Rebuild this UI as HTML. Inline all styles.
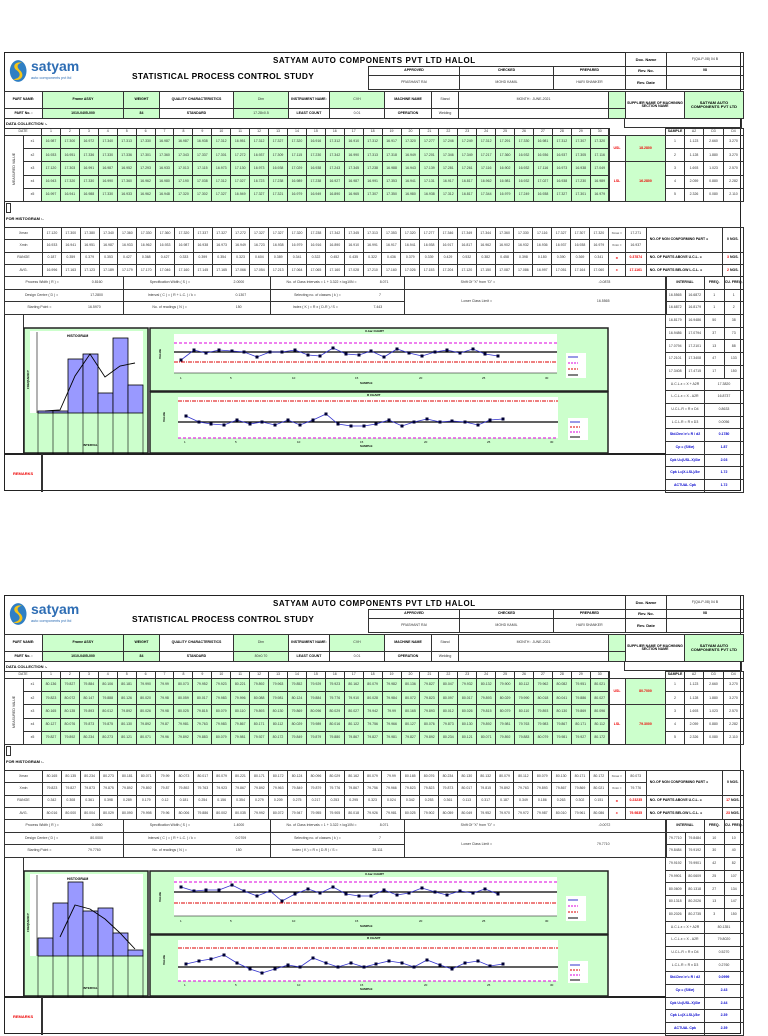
<!DOCTYPE html>
<html><head><meta charset="utf-8">
<style>
body{margin:0;width:768px;height:1024px;overflow:hidden;background:#fff;font-family:"Liberation Sans",sans-serif;position:relative}
.pg{position:absolute;left:4px;width:737px;height:439px;border:1.5px solid #222;box-sizing:border-box}
.a{position:absolute}
table{border-collapse:collapse;table-layout:fixed;position:absolute}
td{border:1px solid #333;font-size:3.5px;text-align:center;padding:0;overflow:hidden;white-space:nowrap;color:#333;line-height:1}
.g{background:#ccffcc}
.b{font-weight:bold;color:#000}
.r{color:#e00;font-weight:bold}
.bl{color:#00c;font-weight:bold}
.lbl{font-size:4px;font-weight:bold;color:#000}
.sp{display:flex;justify-content:space-around;padding:0 4px}
.mk{color:#e00;font-size:3px;font-weight:bold}
</style></head><body>

<!-- ================= PAGE 1 ================= -->
<div class="pg" style="top:52px">
  <svg class="a" style="left:4px;top:5px" width="20" height="26" viewBox="0 0 24 30"><ellipse cx="11" cy="15" rx="10" ry="13" fill="#2f7fc4"/><path d="M16 5 C8 3 3 9 9 14 C15 18 14 24 5 25 C12 28 20 22 14 15 C8 10 10 6 16 5Z" fill="#f5c518"/></svg>
  <div class="a" style="left:26px;top:5px;font-size:14px;font-weight:bold;color:#2d6db4">satyam</div>
  <div class="a" style="left:26px;top:23px;font-size:3.8px;color:#2d6db4">auto components pvt ltd</div>
  <div class="a b" style="left:268px;top:3px;font-size:8px;letter-spacing:0.6px">SATYAM AUTO COMPONENTS PVT LTD HALOL</div>
  <div class="a b" style="left:127px;top:18px;font-size:8.4px;letter-spacing:0.35px">STATISTICAL PROCESS CONTROL STUDY</div>
  <table style="left:363px;top:13px;width:257px"><colgroup><col style="width:91px"><col style="width:94px"><col style="width:72px"></colgroup>
   <tr style="height:9px"><td class="b">APPROVED</td><td class="b">CHECKED</td><td class="b">PREPARED</td></tr>
   <tr style="height:14px"><td>PRASHANT RAI</td><td>MOHD KAMIL</td><td>HARI SHANKER</td></tr></table>
  <table style="left:620px;top:-1px;width:118px"><colgroup><col style="width:41px"><col style="width:77px"></colgroup>
   <tr style="height:14px"><td class="lbl">Doc. Name</td><td>F(QA-P-08) 04 B</td></tr>
   <tr style="height:9px"><td class="lbl">Rev. No.</td><td class="b">08</td></tr>
   <tr style="height:14px"><td class="lbl">Rev. Date</td><td></td></tr></table>
  <table style="left:-1px;top:38px;width:739px"><colgroup><col style="width:38px"><col style="width:81px"><col style="width:36px"><col style="width:74px"><col style="width:55px"><col style="width:41px"><col style="width:55px"><col style="width:47px"><col style="width:27px"><col style="width:150px"><col style="width:17px"><col style="width:59px"><col style="width:59px"></colgroup>
   <tr style="height:17px"><td class="b">PART NAME:</td><td class="g b">Frame ASSY</td><td class="g b">WEIGHT</td><td class="b">QUALITY CHARACTERISTICS</td><td class="g">Dim</td><td class="b">INSTRUMENT NAME:</td><td class="g">CVH</td><td class="b">MACHINE NAME</td><td>Stand</td><td>MONTH : JUNE-2021</td><td class="g"></td><td rowspan="2" class="b">SUPPLIER NAME OF MACHINING<br>SECTION NAME</td><td rowspan="2" class="g b" style="font-size:4px">SATYAM AUTO<br>COMPONENTS PVT LTD</td></tr>
   <tr style="height:10px"><td class="b">PART No. :</td><td class="g b">1010-0405-000</td><td class="g b">84</td><td class="b">STANDARD</td><td class="g">17.28±0.5</td><td class="b">LEAST COUNT</td><td>0.01</td><td class="b">OPERATION</td><td>Welding</td><td></td><td class="g"></td></tr></table>
  <div class="a lbl" style="left:1px;top:68px">DATA COLLECTION :-</div>
  <div class="a" style="left:619px;top:65px;width:118px;height:10px;border:1px solid #333;box-sizing:border-box"></div>
  <table style="left:-1px;top:75px;width:605px"><colgroup><col style="width:19px"><col style="width:18px"><col span="30" style="width:18.93px"></colgroup>
   <tr style="height:7px"><td colspan="2">DATE</td><td>1</td><td>2</td><td>3</td><td>4</td><td>5</td><td>6</td><td>7</td><td>8</td><td>9</td><td>10</td><td>11</td><td>12</td><td>13</td><td>14</td><td>15</td><td>16</td><td>17</td><td>18</td><td>19</td><td>20</td><td>21</td><td>22</td><td>23</td><td>24</td><td>25</td><td>26</td><td>27</td><td>28</td><td>29</td><td>30</td></tr>
   <tr style="height:13.2px"><td rowspan="5" style="writing-mode:vertical-rl;transform:rotate(180deg)">MEASURED VALUE</td><td>x1</td><td class="g">16.987</td><td class="g">17.300</td><td class="g">16.972</td><td class="g">17.340</td><td class="g">17.313</td><td class="g">17.330</td><td class="g">16.987</td><td class="g">16.987</td><td class="g">16.938</td><td class="g">17.312</td><td class="g">16.951</td><td class="g">17.312</td><td class="g">17.327</td><td class="g">17.320</td><td class="g">16.916</td><td class="g">17.312</td><td class="g">16.910</td><td class="g">17.312</td><td class="g">16.917</td><td class="g">17.320</td><td class="g">17.277</td><td class="g">17.246</td><td class="g">17.249</td><td class="g">17.312</td><td class="g">17.291</td><td class="g">17.330</td><td class="g">16.981</td><td class="g">17.312</td><td class="g">17.307</td><td class="g">17.320</td></tr>
   <tr style="height:13.2px"><td>x2</td><td class="g">16.933</td><td class="g">16.951</td><td class="g">17.336</td><td class="g">17.330</td><td class="g">17.336</td><td class="g">17.301</td><td class="g">17.360</td><td class="g">17.343</td><td class="g">17.337</td><td class="g">17.301</td><td class="g">17.272</td><td class="g">16.937</td><td class="g">17.309</td><td class="g">17.115</td><td class="g">17.230</td><td class="g">17.342</td><td class="g">16.990</td><td class="g">17.313</td><td class="g">17.318</td><td class="g">16.949</td><td class="g">17.201</td><td class="g">17.346</td><td class="g">17.349</td><td class="g">17.217</td><td class="g">17.360</td><td class="g">16.932</td><td class="g">16.936</td><td class="g">16.937</td><td class="g">17.305</td><td class="g">17.116</td></tr>
   <tr style="height:13.2px"><td>x3</td><td class="g">17.120</td><td class="g">17.303</td><td class="g">16.991</td><td class="g">16.987</td><td class="g">16.952</td><td class="g">17.293</td><td class="g">16.933</td><td class="g">17.013</td><td class="g">17.115</td><td class="g">16.973</td><td class="g">17.130</td><td class="g">16.973</td><td class="g">16.938</td><td class="g">17.029</td><td class="g">16.938</td><td class="g">17.243</td><td class="g">17.345</td><td class="g">17.238</td><td class="g">16.988</td><td class="g">16.943</td><td class="g">17.139</td><td class="g">17.281</td><td class="g">17.261</td><td class="g">17.116</td><td class="g">16.902</td><td class="g">16.932</td><td class="g">17.116</td><td class="g">16.973</td><td class="g">16.938</td><td class="g">17.049</td></tr>
   <tr style="height:13.2px"><td>x4</td><td class="g">16.943</td><td class="g">17.320</td><td class="g">17.330</td><td class="g">16.990</td><td class="g">17.360</td><td class="g">16.962</td><td class="g">16.980</td><td class="g">17.190</td><td class="g">17.038</td><td class="g">17.312</td><td class="g">17.027</td><td class="g">16.723</td><td class="g">17.238</td><td class="g">16.989</td><td class="g">17.238</td><td class="g">16.927</td><td class="g">16.987</td><td class="g">16.991</td><td class="g">17.353</td><td class="g">16.941</td><td class="g">17.131</td><td class="g">16.917</td><td class="g">16.817</td><td class="g">16.962</td><td class="g">16.981</td><td class="g">16.932</td><td class="g">17.027</td><td class="g">16.938</td><td class="g">17.230</td><td class="g">16.989</td></tr>
   <tr style="height:13.2px"><td>x5</td><td class="g">16.997</td><td class="g">16.941</td><td class="g">16.988</td><td class="g">17.330</td><td class="g">16.933</td><td class="g">16.962</td><td class="g">16.948</td><td class="g">17.320</td><td class="g">17.302</td><td class="g">17.327</td><td class="g">16.949</td><td class="g">17.327</td><td class="g">17.321</td><td class="g">16.979</td><td class="g">16.949</td><td class="g">16.890</td><td class="g">16.965</td><td class="g">17.307</td><td class="g">17.350</td><td class="g">16.980</td><td class="g">16.938</td><td class="g">17.312</td><td class="g">16.817</td><td class="g">17.344</td><td class="g">16.979</td><td class="g">17.249</td><td class="g">16.938</td><td class="g">17.327</td><td class="g">17.301</td><td class="g">16.979</td></tr></table>
  <table style="left:603px;top:75px;width:135px"><colgroup><col style="width:17px"><col style="width:40px"><col style="width:19px"><col style="width:19px"><col style="width:20px"><col style="width:20px"></colgroup>
   <tr style="height:7px"><td colspan="2" style="border-top:none"></td><td class="b">SAMPLE</td><td>A2</td><td>D3</td><td>D4</td></tr>
   <tr style="height:13.2px"><td rowspan="2" class="r">USL</td><td rowspan="2" class="g r">18.2800</td><td>1</td><td>1.123</td><td>2.660</td><td>3.270</td></tr>
   <tr style="height:13.2px"><td>2</td><td>1.128</td><td>1.880</td><td>3.270</td></tr>
   <tr style="height:13.2px"><td rowspan="3" class="r">LSL</td><td rowspan="3" class="g r">16.2800</td><td>3</td><td>1.693</td><td>1.023</td><td>2.570</td></tr>
   <tr style="height:13.2px"><td>4</td><td>2.059</td><td>0.880</td><td>2.282</td></tr>
   <tr style="height:13.2px"><td>5</td><td>2.326</td><td>0.080</td><td>2.110</td></tr></table>
  <div class="a" style="left:1px;top:150px;width:3px;height:8px;border:1px solid #333"></div>
  <div class="a lbl" style="left:1px;top:163px">FOR HISTOGRAM :-</div>
  <table style="left:-1px;top:174px;width:739px"><colgroup><col style="width:38px"><col span="30" style="width:18.87px"><col style="width:17px"><col style="width:21px"><col style="width:76px"><col style="width:21px"></colgroup>
   <tr style="height:12.25px"><td>Xmax</td><td>17.120</td><td>17.300</td><td>17.380</td><td>17.340</td><td>17.360</td><td>17.330</td><td>17.360</td><td>17.320</td><td>17.337</td><td>17.327</td><td>17.272</td><td>17.327</td><td>17.327</td><td>17.320</td><td>17.238</td><td>17.342</td><td>17.345</td><td>17.313</td><td>17.353</td><td>17.320</td><td>17.277</td><td>17.346</td><td>17.349</td><td>17.344</td><td>17.360</td><td>17.330</td><td>17.116</td><td>17.327</td><td>17.307</td><td>17.320</td><td style="font-size:3px">Xmax =</td><td>17.271</td><td rowspan="2" class="b" style="text-align:left;padding-left:3px">NO.OF NON CONFORMING PART =</td><td rowspan="2" class="b">0 NOS.</td></tr>
   <tr style="height:12.25px"><td>Xmin</td><td>16.933</td><td>16.941</td><td>16.951</td><td>16.987</td><td>16.933</td><td>16.962</td><td>16.933</td><td>16.987</td><td>16.938</td><td>16.973</td><td>16.949</td><td>16.723</td><td>16.938</td><td>16.979</td><td>16.916</td><td>16.890</td><td>16.910</td><td>16.991</td><td>16.917</td><td>16.941</td><td>16.938</td><td>16.917</td><td>16.817</td><td>16.962</td><td>16.902</td><td>16.932</td><td>16.936</td><td>16.937</td><td>16.938</td><td>16.979</td><td style="font-size:3px">Xmin =</td><td>16.937</td></tr>
   <tr style="height:12.25px"><td>RANGE</td><td>0.187</td><td>0.359</td><td>0.379</td><td>0.353</td><td>0.427</td><td>0.368</td><td>0.427</td><td>0.333</td><td>0.399</td><td>0.354</td><td>0.323</td><td>0.604</td><td>0.389</td><td>0.341</td><td>0.322</td><td>0.452</td><td>0.435</td><td>0.322</td><td>0.436</td><td>0.379</td><td>0.339</td><td>0.429</td><td>0.532</td><td>0.382</td><td>0.458</td><td>0.398</td><td>0.180</td><td>0.390</td><td>0.369</td><td>0.341</td><td class="mk">R</td><td class="r">0.37874</td><td class="b" style="text-align:left;padding-left:3px">NO. OF PARTS ABOVE U.C.L. =</td><td class="b"><span class="r">3</span> NOS.</td></tr>
   <tr style="height:12.25px"><td>AVG.</td><td>16.996</td><td>17.163</td><td>17.123</td><td>17.189</td><td>17.179</td><td>17.170</td><td>17.046</td><td>17.160</td><td>17.145</td><td>17.165</td><td>17.066</td><td>17.054</td><td>17.213</td><td>17.064</td><td>17.065</td><td>17.160</td><td>17.028</td><td>17.210</td><td>17.160</td><td>17.026</td><td>17.153</td><td>17.204</td><td>17.120</td><td>17.150</td><td>17.087</td><td>17.086</td><td>16.997</td><td>17.051</td><td>17.164</td><td>17.060</td><td class="mk">X</td><td class="r">17.1161</td><td class="b" style="text-align:left;padding-left:3px">NO. OF PARTS BELOW L.C.L. =</td><td class="b"><span class="r">2</span> NOS.</td></tr></table>
  <table style="left:-1px;top:223px;width:662px"><colgroup><col style="width:119px"><col style="width:147px"><col style="width:134px"><col style="width:262px"></colgroup>
   <tr style="height:12.7px"><td><div class="sp"><span>Process Width ( R ) =</span><span>0.8160</span></div></td><td><div class="sp"><span>Specification Width ( S ) =</span><span>2.0000</span></div></td><td><div class="sp"><span>No. of Class Intervals = 1 + 3.322 × log10N =</span><span>8.071</span></div></td><td><div class="sp"><span>Shift Of "X" from "D" =</span><span>-0.0878</span></div></td></tr>
   <tr style="height:12.7px"><td><div class="sp"><span>Design Centre ( D ) =</span><span>17.2800</span></div></td><td><div class="sp"><span>Interval ( C ) = ( R + L.C. ) / k =</span><span>0.1307</span></div></td><td><div class="sp"><span>Selecting no. of classes ( k ) =</span><span>7</span></div></td><td rowspan="2"><div class="sp"><span>Lower Class Limit =</span><span>16.5565</span></div></td></tr>
   <tr style="height:12.7px"><td><div class="sp"><span>Starting Point =</span><span>16.5970</span></div></td><td><div class="sp"><span>No. of readings ( N ) =</span><span>150</span></div></td><td><div class="sp"><span>Index ( K ) = R x ( D-R ) / S =</span><span>7.443</span></div></td></tr></table>
  <table style="left:660px;top:223px;width:78px"><colgroup><col style="width:19.5px"><col style="width:19.5px"><col style="width:19.5px"><col style="width:19.5px"></colgroup>
   <tr style="height:12.7px"><td colspan="2" class="b">INTERVAL</td><td class="b">FREQ.</td><td class="b">CU. FREQ.</td></tr>
   <tr style="height:12.7px"><td>16.5565</td><td>16.6872</td><td>1</td><td>1</td></tr>
   <tr style="height:12.7px"><td>16.6872</td><td>16.8179</td><td>1</td><td>2</td></tr>
   <tr style="height:12.7px"><td>16.8179</td><td>16.9486</td><td>50</td><td>38</td></tr>
   <tr style="height:12.7px"><td>16.9486</td><td>17.0794</td><td>37</td><td>73</td></tr>
   <tr style="height:12.7px"><td>17.0794</td><td>17.2101</td><td>13</td><td>88</td></tr>
   <tr style="height:12.7px"><td>17.2101</td><td>17.3408</td><td>47</td><td>133</td></tr>
   <tr style="height:12.7px"><td>17.3408</td><td>17.4715</td><td>17</td><td>150</td></tr>
   <tr style="height:12.7px"><td colspan="2">U.C.L.x = X + A2R</td><td colspan="2">17.3820</td></tr>
   <tr style="height:12.7px"><td colspan="2">L.C.L.x = X - A2R</td><td colspan="2">16.8737</td></tr>
   <tr style="height:12.7px"><td colspan="2">U.C.L.R = R x D4</td><td colspan="2">0.8633</td></tr>
   <tr style="height:12.7px"><td colspan="2">L.C.L.R = R x D3</td><td colspan="2">0.0056</td></tr>
   <tr style="height:12.7px"><td colspan="2" class="bl">Std.Dev.'σ'= R / d2</td><td colspan="2" class="bl">0.1780</td></tr>
   <tr style="height:12.7px"><td colspan="2" class="bl">Cp = (S/6σ)</td><td colspan="2" class="bl">1.87</td></tr>
   <tr style="height:12.7px"><td colspan="2" class="bl">Cpk U=(USL-X)/3σ</td><td colspan="2" class="bl">2.03</td></tr>
   <tr style="height:12.7px"><td colspan="2" class="bl">Cpk L=(X-LSL)/3σ</td><td colspan="2" class="bl">1.72</td></tr>
   <tr style="height:12.7px"><td colspan="2" class="bl">ACTUAL Cpk</td><td colspan="2" class="bl">1.72</td></tr></table>
  <div class="a" style="left:18px;top:261px;width:1px;height:140px;background:#333"></div>
  <div class="a" style="left:-1px;top:400px;width:662px;height:1.5px;background:#222"></div>
  <div class="a" style="left:36px;top:401px;width:1.5px;height:38px;background:#333"></div>
  <div class="a r" style="left:8px;top:418px;font-size:4px">REMARKS</div>
  <svg class="a" style="left:0;top:261px" width="660" height="140" viewBox="0 0 660 140" font-family="Liberation Sans" font-size="3">
    <rect x="19" y="14" width="124" height="125" fill="#ccffcc" stroke="#222" stroke-width="1.5"/>
    <rect x="25" y="17" width="113" height="82" fill="#fff"/>
    <text x="62" y="23" font-weight="bold" font-size="3.5">HISTOGRAM</text>
    <text x="24" y="75" font-weight="bold" font-size="3" transform="rotate(-90 24 75)">FREQUENCY</text>
    <line x1="32" y1="18" x2="32" y2="99" stroke="#000" stroke-width="0.6"/>
    <g fill="#9999ff" stroke="#000" stroke-width="0.8"><rect x="33" y="97" width="15" height="2"/><rect x="48" y="97" width="15" height="2"/><rect x="63" y="45" width="15" height="54"/><rect x="78" y="40" width="15" height="59"/><rect x="93" y="79" width="15" height="20"/><rect x="108" y="24" width="15" height="75"/><rect x="123" y="71" width="15" height="28"/></g>
    <path d="M40 97 L55 96 L70 62 L85 40 L100 63 L115 52 L130 49" fill="none" stroke="#000" stroke-width="0.9"/>
    <g stroke="#000" stroke-width="0.6"><line x1="33" y1="99" x2="33" y2="144"/><line x1="48" y1="99" x2="48" y2="144"/><line x1="63" y1="99" x2="63" y2="144"/><line x1="78" y1="99" x2="78" y2="144"/><line x1="93" y1="99" x2="93" y2="144"/><line x1="108" y1="99" x2="108" y2="144"/><line x1="123" y1="99" x2="123" y2="144"/><line x1="138" y1="99" x2="138" y2="144"/></g>
    <text x="78" y="132" font-weight="bold" font-size="3">INTERVAL</text>
    <rect x="145" y="14" width="458" height="63" fill="#ccffcc" stroke="#222" stroke-width="1.5"/>
    <rect x="169" y="20" width="383" height="39" fill="#fff"/>
    <text x="360" y="18" font-weight="bold">X-bar CHART</text>
    <text x="355" y="70" font-weight="bold">SAMPLE</text>
    <line x1="169" y1="29" x2="552" y2="29" stroke="#d0d" stroke-width="1" stroke-dasharray="3,2"/>
    <line x1="169" y1="48" x2="552" y2="48" stroke="#d00" stroke-width="1" stroke-dasharray="4,1,1,1"/>
    <line x1="169" y1="38" x2="552" y2="38" stroke="#000" stroke-width="1.3"/>
    <polyline fill="none" stroke="#33c" stroke-width="0.8" points="176,46 189,36 201,39 214,36 227,37 239,38 252,43 265,38 277,38 290,36 303,41 315,42 328,34 341,40 354,41 366,37 379,43 392,35 404,39 417,42 430,38 442,36 455,39 468,35 480,40 493,42"/>
    <g fill="#003">
      <rect x="174.5" y="44.5" width="3" height="3"/><rect x="187.5" y="34.5" width="3" height="3"/><rect x="199.5" y="37.5" width="3" height="3"/><rect x="212.5" y="34.5" width="3" height="3"/><rect x="225.5" y="35.5" width="3" height="3"/><rect x="237.5" y="36.5" width="3" height="3"/><rect x="250.5" y="41.5" width="3" height="3"/><rect x="263.5" y="36.5" width="3" height="3"/><rect x="275.5" y="36.5" width="3" height="3"/><rect x="288.5" y="34.5" width="3" height="3"/><rect x="301.5" y="39.5" width="3" height="3"/><rect x="313.5" y="40.5" width="3" height="3"/><rect x="326.5" y="32.5" width="3" height="3"/><rect x="339.5" y="38.5" width="3" height="3"/><rect x="352.5" y="39.5" width="3" height="3"/><rect x="364.5" y="35.5" width="3" height="3"/><rect x="377.5" y="41.5" width="3" height="3"/><rect x="390.5" y="33.5" width="3" height="3"/><rect x="402.5" y="37.5" width="3" height="3"/><rect x="415.5" y="40.5" width="3" height="3"/><rect x="428.5" y="36.5" width="3" height="3"/><rect x="440.5" y="34.5" width="3" height="3"/><rect x="453.5" y="37.5" width="3" height="3"/><rect x="466.5" y="33.5" width="3" height="3"/><rect x="478.5" y="38.5" width="3" height="3"/><rect x="491.5" y="40.5" width="3" height="3"/>
    </g>
    <line x1="169" y1="59" x2="552" y2="59" stroke="#000" stroke-width="0.6"/>
    <text x="175" y="65">1</text><text x="225" y="65">5</text><text x="287" y="65">10</text><text x="350" y="65">15</text><text x="414" y="65">20</text><text x="477" y="65">25</text><text x="540" y="65">30</text>
    <text x="156" y="45" font-weight="bold" transform="rotate(-90 156 45)">VALUE</text>
    <rect x="561" y="39" width="20" height="25" fill="#fff"/>
    <line x1="563" y1="43" x2="573" y2="43" stroke="#33c"/><line x1="563" y1="49" x2="573" y2="49" stroke="#d0d" stroke-dasharray="2,1"/><line x1="563" y1="55" x2="573" y2="55" stroke="#d00" stroke-dasharray="2,1"/><line x1="563" y1="61" x2="573" y2="61" stroke="#000"/>
    <rect x="145" y="78" width="458" height="61" fill="#ccffcc" stroke="#222" stroke-width="1.5"/>
    <rect x="173" y="83" width="380" height="41" fill="#fff"/>
    <text x="362" y="82" font-weight="bold">R CHART</text>
    <text x="355" y="133" font-weight="bold">SAMPLE</text>
    <line x1="173" y1="87" x2="553" y2="87" stroke="#d00" stroke-width="1" stroke-dasharray="4,1,1,1"/>
    <line x1="173" y1="124" x2="553" y2="124" stroke="#d0d" stroke-width="1" stroke-dasharray="3,2"/>
    <line x1="173" y1="108" x2="553" y2="108" stroke="#000" stroke-width="1.3"/>
    <polyline fill="none" stroke="#33c" stroke-width="0.8" points="181,102 194,108 206,110 219,111 232,106 245,110 257,108 270,111 283,106 295,111 308,106 321,100 333,110 346,112 359,112 371,110 384,106 397,112 409,108 422,105 435,108 447,107 460,108 473,111 485,106 498,105"/>
    <g fill="#003">
      <rect x="179.5" y="100.5" width="3" height="3"/><rect x="192.5" y="106.5" width="3" height="3"/><rect x="204.5" y="108.5" width="3" height="3"/><rect x="217.5" y="109.5" width="3" height="3"/><rect x="230.5" y="104.5" width="3" height="3"/><rect x="243.5" y="108.5" width="3" height="3"/><rect x="255.5" y="106.5" width="3" height="3"/><rect x="268.5" y="109.5" width="3" height="3"/><rect x="281.5" y="104.5" width="3" height="3"/><rect x="293.5" y="109.5" width="3" height="3"/><rect x="306.5" y="104.5" width="3" height="3"/><rect x="319.5" y="98.5" width="3" height="3"/><rect x="331.5" y="108.5" width="3" height="3"/><rect x="344.5" y="110.5" width="3" height="3"/><rect x="357.5" y="110.5" width="3" height="3"/><rect x="369.5" y="108.5" width="3" height="3"/><rect x="382.5" y="104.5" width="3" height="3"/><rect x="395.5" y="110.5" width="3" height="3"/><rect x="407.5" y="106.5" width="3" height="3"/><rect x="420.5" y="103.5" width="3" height="3"/><rect x="433.5" y="106.5" width="3" height="3"/><rect x="445.5" y="105.5" width="3" height="3"/><rect x="458.5" y="106.5" width="3" height="3"/><rect x="471.5" y="109.5" width="3" height="3"/><rect x="483.5" y="104.5" width="3" height="3"/><rect x="496.5" y="103.5" width="3" height="3"/>
    </g>
    <text x="179" y="129">1</text><text x="230" y="129">5</text><text x="292" y="129">10</text><text x="355" y="129">15</text><text x="419" y="129">20</text><text x="482" y="129">25</text><text x="545" y="129">30</text>
    <text x="160" y="108" font-weight="bold" transform="rotate(-90 160 108)">VALUE</text>
    <rect x="563" y="104" width="20" height="22" fill="#fff"/>
    <line x1="565" y1="108" x2="575" y2="108" stroke="#33c"/><line x1="565" y1="113" x2="575" y2="113" stroke="#d00" stroke-dasharray="2,1"/><line x1="565" y1="118" x2="575" y2="118" stroke="#d0d" stroke-dasharray="2,1"/><line x1="565" y1="123" x2="575" y2="123" stroke="#000"/>
  </svg>
</div>

<!-- ================= PAGE 2 ================= -->
<div class="pg" style="top:595px">
  <svg class="a" style="left:4px;top:5px" width="20" height="26" viewBox="0 0 24 30"><ellipse cx="11" cy="15" rx="10" ry="13" fill="#2f7fc4"/><path d="M16 5 C8 3 3 9 9 14 C15 18 14 24 5 25 C12 28 20 22 14 15 C8 10 10 6 16 5Z" fill="#f5c518"/></svg>
  <div class="a" style="left:26px;top:5px;font-size:14px;font-weight:bold;color:#2d6db4">satyam</div>
  <div class="a" style="left:26px;top:23px;font-size:3.8px;color:#2d6db4">auto components pvt ltd</div>
  <div class="a b" style="left:268px;top:3px;font-size:8px;letter-spacing:0.6px">SATYAM AUTO COMPONENTS PVT LTD HALOL</div>
  <div class="a b" style="left:127px;top:18px;font-size:8.4px;letter-spacing:0.35px">STATISTICAL PROCESS CONTROL STUDY</div>
  <table style="left:363px;top:13px;width:257px"><colgroup><col style="width:91px"><col style="width:94px"><col style="width:72px"></colgroup>
   <tr style="height:9px"><td class="b">APPROVED</td><td class="b">CHECKED</td><td class="b">PREPARED</td></tr>
   <tr style="height:14px"><td>PRASHANT RAI</td><td>MOHD KAMIL</td><td>HARI SHANKER</td></tr></table>
  <table style="left:620px;top:-1px;width:118px"><colgroup><col style="width:41px"><col style="width:77px"></colgroup>
   <tr style="height:14px"><td class="lbl">Doc. Name</td><td>F(QA-P-08) 04 B</td></tr>
   <tr style="height:9px"><td class="lbl">Rev. No.</td><td class="b">08</td></tr>
   <tr style="height:14px"><td class="lbl">Rev. Date</td><td></td></tr></table>
  <table style="left:-1px;top:38px;width:739px"><colgroup><col style="width:38px"><col style="width:81px"><col style="width:36px"><col style="width:74px"><col style="width:55px"><col style="width:41px"><col style="width:55px"><col style="width:47px"><col style="width:27px"><col style="width:150px"><col style="width:17px"><col style="width:59px"><col style="width:59px"></colgroup>
   <tr style="height:17px"><td class="b">PART NAME:</td><td class="g b">Frame ASSY</td><td class="g b">WEIGHT</td><td class="b">QUALITY CHARACTERISTICS</td><td class="g">Dim</td><td class="b">INSTRUMENT NAME:</td><td class="g">CVH</td><td class="b">MACHINE NAME</td><td>Stand</td><td>MONTH : JUNE-2021</td><td class="g"></td><td rowspan="2" class="b">SUPPLIER NAME OF MACHINING<br>SECTION NAME</td><td rowspan="2" class="g b" style="font-size:4px">SATYAM AUTO<br>COMPONENTS PVT LTD</td></tr>
   <tr style="height:10px"><td class="b">PART No. :</td><td class="g b">1010-0405-000</td><td class="g b">84</td><td class="b">STANDARD</td><td class="g">80±0.70</td><td class="b">LEAST COUNT</td><td>0.01</td><td class="b">OPERATION</td><td>Welding</td><td></td><td class="g"></td></tr></table>
  <div class="a lbl" style="left:1px;top:68px">DATA COLLECTION :-</div>
  <div class="a" style="left:619px;top:65px;width:118px;height:10px;border:1px solid #333;box-sizing:border-box"></div>
  <table style="left:-1px;top:75px;width:605px"><colgroup><col style="width:19px"><col style="width:18px"><col span="30" style="width:18.93px"></colgroup>
   <tr style="height:7px"><td colspan="2">DATE</td><td>1</td><td>2</td><td>3</td><td>4</td><td>5</td><td>6</td><td>7</td><td>8</td><td>9</td><td>10</td><td>11</td><td>12</td><td>13</td><td>14</td><td>15</td><td>16</td><td>17</td><td>18</td><td>19</td><td>20</td><td>21</td><td>22</td><td>23</td><td>24</td><td>25</td><td>26</td><td>27</td><td>28</td><td>29</td><td>30</td></tr>
   <tr style="height:13.2px"><td rowspan="5" style="writing-mode:vertical-rl;transform:rotate(180deg)">MEASURED VALUE</td><td>x1</td><td class="g">80.136</td><td class="g">79.827</td><td class="g">79.884</td><td class="g">80.106</td><td class="g">80.181</td><td class="g">79.990</td><td class="g">79.99</td><td class="g">80.073</td><td class="g">79.952</td><td class="g">79.923</td><td class="g">80.221</td><td class="g">79.892</td><td class="g">79.963</td><td class="g">79.852</td><td class="g">79.929</td><td class="g">79.923</td><td class="g">80.162</td><td class="g">80.079</td><td class="g">79.982</td><td class="g">80.136</td><td class="g">79.827</td><td class="g">80.047</td><td class="g">79.932</td><td class="g">80.132</td><td class="g">79.900</td><td class="g">80.112</td><td class="g">79.962</td><td class="g">80.082</td><td class="g">79.951</td><td class="g">80.021</td></tr>
   <tr style="height:13.2px"><td>x2</td><td class="g">79.823</td><td class="g">80.072</td><td class="g">80.147</td><td class="g">79.888</td><td class="g">80.126</td><td class="g">80.020</td><td class="g">79.98</td><td class="g">80.059</td><td class="g">80.017</td><td class="g">79.983</td><td class="g">79.996</td><td class="g">80.088</td><td class="g">79.981</td><td class="g">80.124</td><td class="g">79.884</td><td class="g">79.776</td><td class="g">79.910</td><td class="g">80.028</td><td class="g">79.984</td><td class="g">80.072</td><td class="g">79.823</td><td class="g">80.097</td><td class="g">80.017</td><td class="g">79.893</td><td class="g">80.029</td><td class="g">79.990</td><td class="g">80.018</td><td class="g">80.041</td><td class="g">79.886</td><td class="g">80.027</td></tr>
   <tr style="height:13.2px"><td>x3</td><td class="g">80.165</td><td class="g">80.135</td><td class="g">79.893</td><td class="g">80.012</td><td class="g">79.892</td><td class="g">80.026</td><td class="g">79.98</td><td class="g">80.025</td><td class="g">79.815</td><td class="g">80.079</td><td class="g">80.110</td><td class="g">79.893</td><td class="g">80.130</td><td class="g">79.869</td><td class="g">80.096</td><td class="g">80.029</td><td class="g">80.027</td><td class="g">79.942</td><td class="g">79.99</td><td class="g">80.165</td><td class="g">79.893</td><td class="g">80.012</td><td class="g">80.026</td><td class="g">79.815</td><td class="g">80.079</td><td class="g">80.110</td><td class="g">79.893</td><td class="g">80.130</td><td class="g">79.869</td><td class="g">80.096</td></tr>
   <tr style="height:13.2px"><td>x4</td><td class="g">80.127</td><td class="g">80.076</td><td class="g">79.873</td><td class="g">79.875</td><td class="g">80.130</td><td class="g">79.892</td><td class="g">79.87</td><td class="g">79.981</td><td class="g">79.763</td><td class="g">79.983</td><td class="g">79.867</td><td class="g">80.171</td><td class="g">80.112</td><td class="g">80.029</td><td class="g">79.989</td><td class="g">80.016</td><td class="g">80.122</td><td class="g">79.756</td><td class="g">79.966</td><td class="g">80.127</td><td class="g">80.076</td><td class="g">79.873</td><td class="g">80.130</td><td class="g">79.892</td><td class="g">79.981</td><td class="g">79.763</td><td class="g">79.983</td><td class="g">79.867</td><td class="g">80.171</td><td class="g">80.112</td></tr>
   <tr style="height:13.2px"><td>x5</td><td class="g">79.827</td><td class="g">79.892</td><td class="g">80.234</td><td class="g">80.273</td><td class="g">80.121</td><td class="g">80.071</td><td class="g">79.96</td><td class="g">79.892</td><td class="g">79.883</td><td class="g">80.079</td><td class="g">79.981</td><td class="g">79.927</td><td class="g">80.172</td><td class="g">79.849</td><td class="g">79.879</td><td class="g">79.880</td><td class="g">79.867</td><td class="g">79.827</td><td class="g">79.981</td><td class="g">79.827</td><td class="g">79.892</td><td class="g">80.234</td><td class="g">80.121</td><td class="g">80.071</td><td class="g">79.892</td><td class="g">79.883</td><td class="g">80.079</td><td class="g">79.981</td><td class="g">79.927</td><td class="g">80.172</td></tr></table>
  <table style="left:603px;top:75px;width:135px"><colgroup><col style="width:17px"><col style="width:40px"><col style="width:19px"><col style="width:19px"><col style="width:20px"><col style="width:20px"></colgroup>
   <tr style="height:7px"><td colspan="2" style="border-top:none"></td><td class="b">SAMPLE</td><td>A2</td><td>D3</td><td>D4</td></tr>
   <tr style="height:13.2px"><td rowspan="2" class="r">USL</td><td rowspan="2" class="g r">80.7000</td><td>1</td><td>1.123</td><td>2.660</td><td>3.270</td></tr>
   <tr style="height:13.2px"><td>2</td><td>1.128</td><td>1.880</td><td>3.270</td></tr>
   <tr style="height:13.2px"><td rowspan="3" class="r">LSL</td><td rowspan="3" class="g r">79.3000</td><td>3</td><td>1.693</td><td>1.023</td><td>2.570</td></tr>
   <tr style="height:13.2px"><td>4</td><td>2.059</td><td>0.880</td><td>2.282</td></tr>
   <tr style="height:13.2px"><td>5</td><td>2.326</td><td>0.080</td><td>2.110</td></tr></table>
  <div class="a" style="left:1px;top:150px;width:3px;height:8px;border:1px solid #333"></div>
  <div class="a lbl" style="left:1px;top:163px">FOR HISTOGRAM :-</div>
  <table style="left:-1px;top:174px;width:739px"><colgroup><col style="width:38px"><col span="30" style="width:18.87px"><col style="width:17px"><col style="width:21px"><col style="width:76px"><col style="width:21px"></colgroup>
   <tr style="height:12.25px"><td>Xmax</td><td>80.165</td><td>80.135</td><td>80.234</td><td>80.273</td><td>80.181</td><td>80.071</td><td>79.99</td><td>80.073</td><td>80.017</td><td>80.079</td><td>80.221</td><td>80.171</td><td>80.172</td><td>80.124</td><td>80.096</td><td>80.029</td><td>80.162</td><td>80.079</td><td>79.99</td><td>80.165</td><td>80.076</td><td>80.234</td><td>80.130</td><td>80.132</td><td>80.079</td><td>80.112</td><td>80.079</td><td>80.130</td><td>80.171</td><td>80.172</td><td style="font-size:3px">Xmax =</td><td>80.073</td><td rowspan="2" class="b" style="text-align:left;padding-left:3px">NO.OF NON CONFORMING PART =</td><td rowspan="2" class="b">0 NOS.</td></tr>
   <tr style="height:12.25px"><td>Xmin</td><td>79.823</td><td>79.827</td><td>79.873</td><td>79.875</td><td>79.892</td><td>79.892</td><td>79.87</td><td>79.892</td><td>79.763</td><td>79.923</td><td>79.867</td><td>79.892</td><td>79.963</td><td>79.849</td><td>79.879</td><td>79.776</td><td>79.867</td><td>79.756</td><td>79.966</td><td>79.823</td><td>79.823</td><td>79.873</td><td>80.017</td><td>79.815</td><td>79.892</td><td>79.763</td><td>79.893</td><td>79.867</td><td>79.869</td><td>80.021</td><td style="font-size:3px">Xmin =</td><td>79.776</td></tr>
   <tr style="height:12.25px"><td>RANGE</td><td>0.342</td><td>0.308</td><td>0.361</td><td>0.398</td><td>0.289</td><td>0.179</td><td>0.12</td><td>0.181</td><td>0.254</td><td>0.156</td><td>0.354</td><td>0.279</td><td>0.209</td><td>0.275</td><td>0.217</td><td>0.253</td><td>0.295</td><td>0.323</td><td>0.024</td><td>0.342</td><td>0.253</td><td>0.361</td><td>0.113</td><td>0.317</td><td>0.187</td><td>0.349</td><td>0.186</td><td>0.263</td><td>0.302</td><td>0.151</td><td class="mk">R</td><td class="r">0.23235</td><td class="b" style="text-align:left;padding-left:3px">NO. OF PARTS ABOVE U.C.L. =</td><td class="b"><span class="r">17</span> NOS.</td></tr>
   <tr style="height:12.25px"><td>AVG.</td><td>80.016</td><td>80.000</td><td>80.004</td><td>80.029</td><td>80.090</td><td>79.998</td><td>79.96</td><td>80.006</td><td>79.886</td><td>80.002</td><td>80.035</td><td>79.992</td><td>80.072</td><td>79.947</td><td>79.955</td><td>79.905</td><td>80.018</td><td>79.926</td><td>79.981</td><td>80.025</td><td>79.902</td><td>80.059</td><td>80.049</td><td>79.952</td><td>79.970</td><td>79.972</td><td>79.987</td><td>80.010</td><td>79.961</td><td>80.086</td><td class="mk">X</td><td class="r">79.9835</td><td class="b" style="text-align:left;padding-left:3px">NO. OF PARTS BELOW L.C.L. =</td><td class="b"><span class="r">23</span> NOS.</td></tr></table>
  <table style="left:-1px;top:223px;width:662px"><colgroup><col style="width:119px"><col style="width:147px"><col style="width:134px"><col style="width:262px"></colgroup>
   <tr style="height:12.7px"><td><div class="sp"><span>Process Width ( R ) =</span><span>0.4960</span></div></td><td><div class="sp"><span>Specification Width ( S ) =</span><span>1.4000</span></div></td><td><div class="sp"><span>No. of Class Intervals = 1 + 3.322 × log10N =</span><span>8.071</span></div></td><td><div class="sp"><span>Shift Of "X" from "D" =</span><span>-0.0072</span></div></td></tr>
   <tr style="height:12.7px"><td><div class="sp"><span>Design Centre ( D ) =</span><span>80.0000</span></div></td><td><div class="sp"><span>Interval ( C ) = ( R + L.C. ) / k =</span><span>0.0709</span></div></td><td><div class="sp"><span>Selecting no. of classes ( k ) =</span><span>7</span></div></td><td rowspan="2"><div class="sp"><span>Lower Class Limit =</span><span>79.7710</span></div></td></tr>
   <tr style="height:12.7px"><td><div class="sp"><span>Starting Point =</span><span>79.7760</span></div></td><td><div class="sp"><span>No. of readings ( N ) =</span><span>150</span></div></td><td><div class="sp"><span>Index ( K ) = R x ( D-R ) / S =</span><span>28.111</span></div></td></tr></table>
  <table style="left:660px;top:223px;width:78px"><colgroup><col style="width:19.5px"><col style="width:19.5px"><col style="width:19.5px"><col style="width:19.5px"></colgroup>
   <tr style="height:12.7px"><td colspan="2" class="b">INTERVAL</td><td class="b">FREQ.</td><td class="b">CU. FREQ.</td></tr>
   <tr style="height:12.7px"><td>79.7710</td><td>79.8484</td><td>10</td><td>10</td></tr>
   <tr style="height:12.7px"><td>79.8484</td><td>79.9192</td><td>30</td><td>40</td></tr>
   <tr style="height:12.7px"><td>79.9192</td><td>79.9901</td><td>42</td><td>82</td></tr>
   <tr style="height:12.7px"><td>79.9901</td><td>80.0609</td><td>25</td><td>107</td></tr>
   <tr style="height:12.7px"><td>80.0609</td><td>80.1318</td><td>27</td><td>134</td></tr>
   <tr style="height:12.7px"><td>80.1318</td><td>80.2026</td><td>13</td><td>147</td></tr>
   <tr style="height:12.7px"><td>80.2026</td><td>80.2735</td><td>3</td><td>150</td></tr>
   <tr style="height:12.7px"><td colspan="2">U.C.L.x = X + A2R</td><td colspan="2">80.1351</td></tr>
   <tr style="height:12.7px"><td colspan="2">L.C.L.x = X - A2R</td><td colspan="2">79.8020</td></tr>
   <tr style="height:12.7px"><td colspan="2">U.C.L.R = R x D4</td><td colspan="2">0.5270</td></tr>
   <tr style="height:12.7px"><td colspan="2">L.C.L.R = R x D3</td><td colspan="2">0.2760</td></tr>
   <tr style="height:12.7px"><td colspan="2" class="bl">Std.Dev.'σ'= R / d2</td><td colspan="2" class="bl">0.0999</td></tr>
   <tr style="height:12.7px"><td colspan="2" class="bl">Cp = (S/6σ)</td><td colspan="2" class="bl">2.43</td></tr>
   <tr style="height:12.7px"><td colspan="2" class="bl">Cpk U=(USL-X)/3σ</td><td colspan="2" class="bl">2.44</td></tr>
   <tr style="height:12.7px"><td colspan="2" class="bl">Cpk L=(X-LSL)/3σ</td><td colspan="2" class="bl">2.39</td></tr>
   <tr style="height:12.7px"><td colspan="2" class="bl">ACTUAL Cpk</td><td colspan="2" class="bl">2.39</td></tr></table>
  <div class="a" style="left:18px;top:261px;width:1px;height:140px;background:#333"></div>
  <div class="a" style="left:-1px;top:400px;width:662px;height:1.5px;background:#222"></div>
  <div class="a" style="left:36px;top:401px;width:1.5px;height:38px;background:#333"></div>
  <div class="a r" style="left:8px;top:418px;font-size:4px">REMARKS</div>
  <svg class="a" style="left:0;top:261px" width="660" height="140" viewBox="0 0 660 140" font-family="Liberation Sans" font-size="3">
    <rect x="19" y="14" width="124" height="125" fill="#ccffcc" stroke="#222" stroke-width="1.5"/>
    <rect x="25" y="17" width="113" height="82" fill="#fff"/>
    <text x="62" y="23" font-weight="bold" font-size="3.5">HISTOGRAM</text>
    <text x="24" y="75" font-weight="bold" font-size="3" transform="rotate(-90 24 75)">FREQUENCY</text>
    <line x1="32" y1="18" x2="32" y2="99" stroke="#000" stroke-width="0.6"/>
    <g fill="#9999ff" stroke="#000" stroke-width="0.8"><rect x="33" y="81" width="15" height="18"/><rect x="48" y="46" width="15" height="53"/><rect x="63" y="25" width="15" height="74"/><rect x="78" y="54" width="15" height="45"/><rect x="93" y="51" width="15" height="48"/><rect x="108" y="76" width="15" height="23"/><rect x="123" y="93" width="15" height="6"/></g>
    <path d="M55 80 L70 48 L85 52 L100 62 L115 76 L130 92" fill="none" stroke="#000" stroke-width="0.9"/>
    <g stroke="#000" stroke-width="0.6"><line x1="33" y1="99" x2="33" y2="144"/><line x1="48" y1="99" x2="48" y2="144"/><line x1="63" y1="99" x2="63" y2="144"/><line x1="78" y1="99" x2="78" y2="144"/><line x1="93" y1="99" x2="93" y2="144"/><line x1="108" y1="99" x2="108" y2="144"/><line x1="123" y1="99" x2="123" y2="144"/><line x1="138" y1="99" x2="138" y2="144"/></g>
    <text x="78" y="132" font-weight="bold" font-size="3">INTERVAL</text>
    <rect x="145" y="14" width="458" height="63" fill="#ccffcc" stroke="#222" stroke-width="1.5"/>
    <rect x="169" y="20" width="383" height="39" fill="#fff"/>
    <text x="360" y="18" font-weight="bold">X-bar CHART</text>
    <text x="355" y="70" font-weight="bold">SAMPLE</text>
    <line x1="169" y1="25" x2="552" y2="25" stroke="#d0d" stroke-width="1" stroke-dasharray="3,2"/>
    <line x1="169" y1="46" x2="552" y2="46" stroke="#d00" stroke-width="1" stroke-dasharray="4,1,1,1"/>
    <line x1="169" y1="35" x2="552" y2="35" stroke="#000" stroke-width="1.3"/>
    <polyline fill="none" stroke="#33c" stroke-width="0.8" points="176,30 189,34 201,33 214,33 227,28 239,34 252,39 265,34 277,44 290,37 303,32 315,36 328,30 341,37 354,39 366,39 379,33 392,38 404,36 417,31 430,35 442,38 455,34 468,36 480,32 493,37"/>
    <g fill="#003">
      <rect x="174.5" y="28.5" width="3" height="3"/><rect x="187.5" y="32.5" width="3" height="3"/><rect x="199.5" y="31.5" width="3" height="3"/><rect x="212.5" y="31.5" width="3" height="3"/><rect x="225.5" y="26.5" width="3" height="3"/><rect x="237.5" y="32.5" width="3" height="3"/><rect x="250.5" y="37.5" width="3" height="3"/><rect x="263.5" y="32.5" width="3" height="3"/><rect x="275.5" y="42.5" width="3" height="3"/><rect x="288.5" y="35.5" width="3" height="3"/><rect x="301.5" y="30.5" width="3" height="3"/><rect x="313.5" y="34.5" width="3" height="3"/><rect x="326.5" y="28.5" width="3" height="3"/><rect x="339.5" y="35.5" width="3" height="3"/><rect x="352.5" y="37.5" width="3" height="3"/><rect x="364.5" y="37.5" width="3" height="3"/><rect x="377.5" y="31.5" width="3" height="3"/><rect x="390.5" y="36.5" width="3" height="3"/><rect x="402.5" y="34.5" width="3" height="3"/><rect x="415.5" y="29.5" width="3" height="3"/><rect x="428.5" y="33.5" width="3" height="3"/><rect x="440.5" y="36.5" width="3" height="3"/><rect x="453.5" y="32.5" width="3" height="3"/><rect x="466.5" y="34.5" width="3" height="3"/><rect x="478.5" y="30.5" width="3" height="3"/><rect x="491.5" y="35.5" width="3" height="3"/>
    </g>
    <line x1="169" y1="59" x2="552" y2="59" stroke="#000" stroke-width="0.6"/>
    <text x="175" y="65">1</text><text x="225" y="65">5</text><text x="287" y="65">10</text><text x="350" y="65">15</text><text x="414" y="65">20</text><text x="477" y="65">25</text><text x="540" y="65">30</text>
    <text x="156" y="45" font-weight="bold" transform="rotate(-90 156 45)">VALUE</text>
    <rect x="561" y="39" width="20" height="25" fill="#fff"/>
    <line x1="563" y1="43" x2="573" y2="43" stroke="#33c"/><line x1="563" y1="49" x2="573" y2="49" stroke="#d0d" stroke-dasharray="2,1"/><line x1="563" y1="55" x2="573" y2="55" stroke="#d00" stroke-dasharray="2,1"/><line x1="563" y1="61" x2="573" y2="61" stroke="#000"/>
    <rect x="145" y="78" width="458" height="61" fill="#ccffcc" stroke="#222" stroke-width="1.5"/>
    <rect x="173" y="83" width="380" height="41" fill="#fff"/>
    <text x="362" y="82" font-weight="bold">R CHART</text>
    <text x="355" y="133" font-weight="bold">SAMPLE</text>
    <line x1="173" y1="91" x2="553" y2="91" stroke="#d00" stroke-width="1" stroke-dasharray="4,1,1,1"/>
    <line x1="173" y1="124" x2="553" y2="124" stroke="#d0d" stroke-width="1" stroke-dasharray="3,2"/>
    <line x1="173" y1="110" x2="553" y2="110" stroke="#000" stroke-width="1.3"/>
    <polyline fill="none" stroke="#33c" stroke-width="0.8" points="181,107 194,104 206,102 219,98 232,106 245,112 257,116 270,112 283,108 295,110 308,101 321,106 333,110 346,106 359,110 371,107 384,104 397,106 409,110 422,103 435,108 447,112 460,106 473,104 485,109 498,107"/>
    <g fill="#003">
      <rect x="179.5" y="105.5" width="3" height="3"/><rect x="192.5" y="102.5" width="3" height="3"/><rect x="204.5" y="100.5" width="3" height="3"/><rect x="217.5" y="96.5" width="3" height="3"/><rect x="230.5" y="104.5" width="3" height="3"/><rect x="243.5" y="110.5" width="3" height="3"/><rect x="255.5" y="114.5" width="3" height="3"/><rect x="268.5" y="110.5" width="3" height="3"/><rect x="281.5" y="106.5" width="3" height="3"/><rect x="293.5" y="108.5" width="3" height="3"/><rect x="306.5" y="99.5" width="3" height="3"/><rect x="319.5" y="104.5" width="3" height="3"/><rect x="331.5" y="108.5" width="3" height="3"/><rect x="344.5" y="104.5" width="3" height="3"/><rect x="357.5" y="108.5" width="3" height="3"/><rect x="369.5" y="105.5" width="3" height="3"/><rect x="382.5" y="102.5" width="3" height="3"/><rect x="395.5" y="104.5" width="3" height="3"/><rect x="407.5" y="108.5" width="3" height="3"/><rect x="420.5" y="101.5" width="3" height="3"/><rect x="433.5" y="106.5" width="3" height="3"/><rect x="445.5" y="110.5" width="3" height="3"/><rect x="458.5" y="104.5" width="3" height="3"/><rect x="471.5" y="102.5" width="3" height="3"/><rect x="483.5" y="107.5" width="3" height="3"/><rect x="496.5" y="105.5" width="3" height="3"/>
    </g>
    <text x="179" y="129">1</text><text x="230" y="129">5</text><text x="292" y="129">10</text><text x="355" y="129">15</text><text x="419" y="129">20</text><text x="482" y="129">25</text><text x="545" y="129">30</text>
    <text x="160" y="108" font-weight="bold" transform="rotate(-90 160 108)">VALUE</text>
    <rect x="563" y="104" width="20" height="22" fill="#fff"/>
    <line x1="565" y1="108" x2="575" y2="108" stroke="#33c"/><line x1="565" y1="113" x2="575" y2="113" stroke="#d00" stroke-dasharray="2,1"/><line x1="565" y1="118" x2="575" y2="118" stroke="#d0d" stroke-dasharray="2,1"/><line x1="565" y1="123" x2="575" y2="123" stroke="#000"/>
  </svg>
</div>
</body></html>
